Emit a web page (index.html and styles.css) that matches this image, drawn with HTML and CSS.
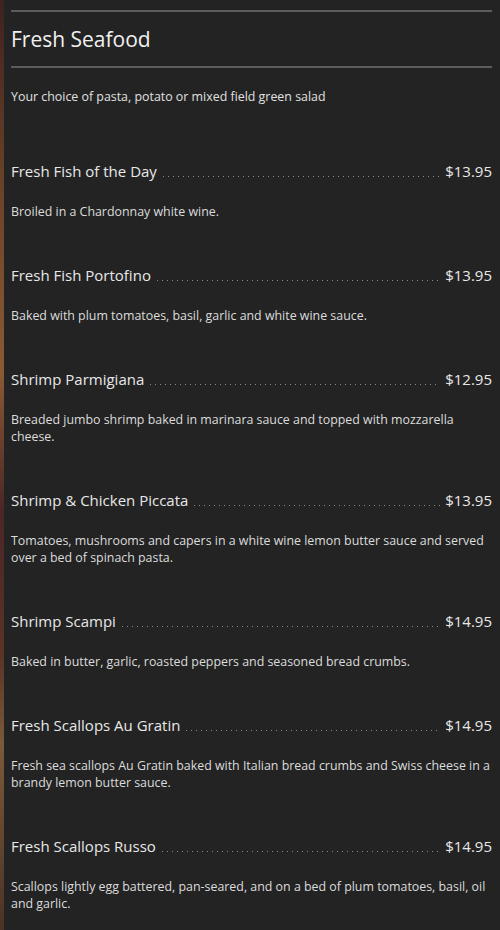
FILE: index.html
```html
<!DOCTYPE html>
<html lang="en">
<head>
  <meta charset="UTF-8">
  <title>Fresh Seafood</title>
  <link rel="stylesheet" href="styles.css">
</head>
<body>

  <!-- MENU SECTION -->
  <div class="menu">
    <hr class="rule">
    <h2 class="section-title">Fresh Seafood</h2>
    <hr class="rule">
    <p class="intro">Your choice of pasta, potato or mixed field green salad</p>

    <div class="item">
      <div class="row"><span class="name">Fresh Fish of the Day</span><span class="leader"></span><span class="price">$13.95</span></div>
      <p class="desc">Broiled in a Chardonnay white wine.</p>
    </div>

    <div class="item">
      <div class="row"><span class="name">Fresh Fish Portofino</span><span class="leader"></span><span class="price">$13.95</span></div>
      <p class="desc">Baked with plum tomatoes, basil, garlic and white wine sauce.</p>
    </div>

    <div class="item">
      <div class="row"><span class="name">Shrimp Parmigiana</span><span class="leader"></span><span class="price">$12.95</span></div>
      <p class="desc">Breaded jumbo shrimp baked in marinara sauce and topped with mozzarella cheese.</p>
    </div>

    <div class="item">
      <div class="row"><span class="name">Shrimp &amp; Chicken Piccata</span><span class="leader"></span><span class="price">$13.95</span></div>
      <p class="desc">Tomatoes, mushrooms and capers in a white wine lemon butter sauce and served over a bed of spinach pasta.</p>
    </div>

    <div class="item">
      <div class="row"><span class="name">Shrimp Scampi</span><span class="leader"></span><span class="price">$14.95</span></div>
      <p class="desc">Baked in butter, garlic, roasted peppers and seasoned bread crumbs.</p>
    </div>

    <div class="item">
      <div class="row"><span class="name">Fresh Scallops Au Gratin</span><span class="leader"></span><span class="price">$14.95</span></div>
      <p class="desc">Fresh sea scallops Au Gratin baked with Italian bread crumbs and Swiss cheese in a brandy lemon butter sauce.</p>
    </div>

    <div class="item">
      <div class="row"><span class="name">Fresh Scallops Russo</span><span class="leader"></span><span class="price">$14.95</span></div>
      <p class="desc">Scallops lightly egg battered, pan-seared, and on a bed of plum tomatoes, basil, oil and garlic.</p>
    </div>
  </div>

</body>
</html>
```

FILE: styles.css
```css
/* ------------- BASE ------------- */
* { margin: 0; padding: 0; box-sizing: border-box; }
body {
  font-family: 'Open Sans', 'Liberation Sans', sans-serif;
  background: linear-gradient(to bottom, #3e2220 0%, #6a4228 20%, #8a5a34 40%, #4a2626 55%, #5a3226 70%, #7a5a3a 80%, #4a3224 100%);
  height: 100vh;
  overflow: hidden;
}

/* ------------- MENU PANEL ------------- */
.menu {
  margin-left: 4px;
  height: 100%;
  background: #232323;
  padding: 10px 8px 0 7px;
  color: #e6e6e6;
}
.rule {
  border: none;
  height: 2px;
  background: #5c5c5c;
}
.section-title {
  font-weight: normal;
  font-size: 21px;
  line-height: 28px;
  margin: 13px 0 13px;
  color: #f0f0f0;
}
.intro {
  font-size: 12.4px;
  line-height: 18px;
  margin-top: 20px;
  margin-bottom: 54px;
  color: #e0e0e0;
}

/* ------------- ITEMS ------------- */
.item { margin-bottom: 44px; }
.row {
  display: flex;
  align-items: baseline;
  font-size: 15px;
  line-height: 22px;
  color: #e8e8e8;
}
.leader {
  flex: 1;
  height: 1px;
  margin: 0 5px 3px 6px;
  background: linear-gradient(to right, #8a8a8a 1px, transparent 1px) repeat-x;
  background-size: 5px 1px;
}
.desc {
  font-size: 12.4px;
  line-height: 17px;
  margin-top: 21px;
  color: #dcdcdc;
}
```
